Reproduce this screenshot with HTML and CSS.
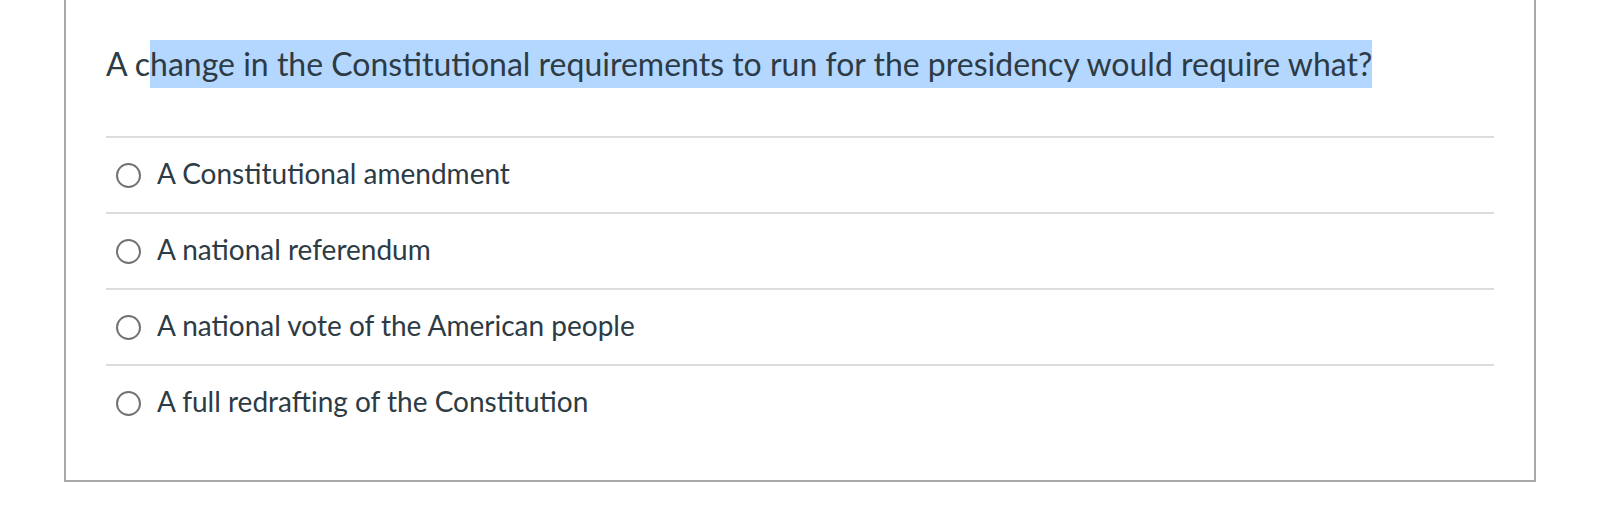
FILE: index.html
```html
<!DOCTYPE html>
<html lang="en">
<head>
<meta charset="utf-8">
<title>Question</title>
<link rel="stylesheet" href="styles.css">
</head>
<body>
<div class="question">
  <div class="question-text">A c<span class="sel">hange in the Constitutional requirements to run for the presidency would require what?</span></div>
  <div class="answers">
    <label class="answer"><span class="radio"></span><span class="answer-text">A Constitutional amendment</span></label>
    <label class="answer"><span class="radio"></span><span class="answer-text">A national referendum</span></label>
    <label class="answer"><span class="radio"></span><span class="answer-text">A national vote of the American people</span></label>
    <label class="answer"><span class="radio"></span><span class="answer-text">A full redrafting of the Constitution</span></label>
  </div>
</div>
</body>
</html>
```

FILE: styles.css
```css
html, body {
  margin: 0;
  padding: 0;
  background: #ffffff;
}

body {
  font-family: "Lato", "Open Sans", sans-serif;
  color: #2d3b45;
}

.question {
  margin-left: 64px;
  width: 1472px;
  box-sizing: border-box;
  border: 2px solid #a8a8a8;
  border-top: none;
  padding: 40px 40px 40px 40px;
}

.question-text {
  font-size: 32px;
  line-height: 48px;
  white-space: nowrap;
  margin-bottom: 48px;
}

.sel {
  background: #b4d7ff;
  display: inline-block;
  line-height: 48px;
}

.answers {
  display: flex;
  flex-direction: column;
}

.answer {
  display: flex;
  align-items: center;
  height: 74px;
  border-top: 2px solid #dddddd;
}

.radio {
  width: 21px;
  height: 21px;
  border: 2px solid #737373;
  border-radius: 50%;
  margin-left: 10px;
  margin-right: 16px;
  flex: none;
  box-sizing: content-box;
}

.answer-text {
  font-size: 28px;
  line-height: 36px;
  margin-bottom: 4px;
}
```
